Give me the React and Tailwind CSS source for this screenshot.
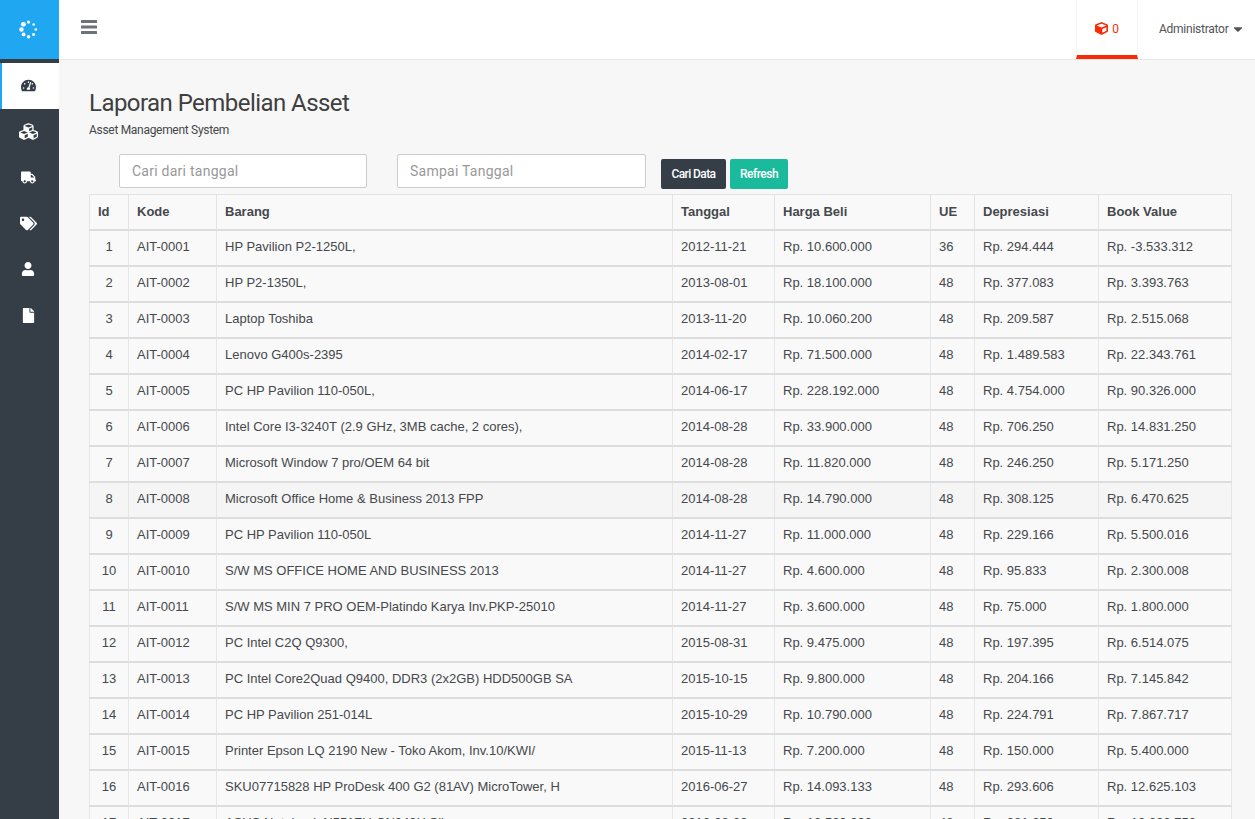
import { FaCaretDown, FaCube, FaCubes, FaFile, FaTachometerAlt, FaTags, FaTruck, FaUser } from "react-icons/fa";

const rows = [
    [1, "AIT-0001", "HP Pavilion P2-1250L,", "2012-11-21", "Rp. 10.600.000", "36", "Rp. 294.444", "Rp. -3.533.312"],
    [2, "AIT-0002", "HP P2-1350L,", "2013-08-01", "Rp. 18.100.000", "48", "Rp. 377.083", "Rp. 3.393.763"],
    [3, "AIT-0003", "Laptop Toshiba", "2013-11-20", "Rp. 10.060.200", "48", "Rp. 209.587", "Rp. 2.515.068"],
    [4, "AIT-0004", "Lenovo G400s-2395", "2014-02-17", "Rp. 71.500.000", "48", "Rp. 1.489.583", "Rp. 22.343.761"],
    [5, "AIT-0005", "PC HP Pavilion 110-050L,", "2014-06-17", "Rp. 228.192.000", "48", "Rp. 4.754.000", "Rp. 90.326.000"],
    [6, "AIT-0006", "Intel Core I3-3240T (2.9 GHz, 3MB cache, 2 cores),", "2014-08-28", "Rp. 33.900.000", "48", "Rp. 706.250", "Rp. 14.831.250"],
    [7, "AIT-0007", "Microsoft Window 7 pro/OEM 64 bit", "2014-08-28", "Rp. 11.820.000", "48", "Rp. 246.250", "Rp. 5.171.250"],
    [8, "AIT-0008", "Microsoft Office Home & Business 2013 FPP", "2014-08-28", "Rp. 14.790.000", "48", "Rp. 308.125", "Rp. 6.470.625"],
    [9, "AIT-0009", "PC HP Pavilion 110-050L", "2014-11-27", "Rp. 11.000.000", "48", "Rp. 229.166", "Rp. 5.500.016"],
    [10, "AIT-0010", "S/W MS OFFICE HOME AND BUSINESS 2013", "2014-11-27", "Rp. 4.600.000", "48", "Rp. 95.833", "Rp. 2.300.008"],
    [11, "AIT-0011", "S/W MS MIN 7 PRO OEM-Platindo Karya Inv.PKP-25010", "2014-11-27", "Rp. 3.600.000", "48", "Rp. 75.000", "Rp. 1.800.000"],
    [12, "AIT-0012", "PC Intel C2Q Q9300,", "2015-08-31", "Rp. 9.475.000", "48", "Rp. 197.395", "Rp. 6.514.075"],
    [13, "AIT-0013", "PC Intel Core2Quad Q9400, DDR3 (2x2GB) HDD500GB SA", "2015-10-15", "Rp. 9.800.000", "48", "Rp. 204.166", "Rp. 7.145.842"],
    [14, "AIT-0014", "PC HP Pavilion 251-014L", "2015-10-29", "Rp. 10.790.000", "48", "Rp. 224.791", "Rp. 7.867.717"],
    [15, "AIT-0015", "Printer Epson LQ 2190 New - Toko Akom, Inv.10/KWI/", "2015-11-13", "Rp. 7.200.000", "48", "Rp. 150.000", "Rp. 5.400.000"],
    [16, "AIT-0016", "SKU07715828 HP ProDesk 400 G2 (81AV) MicroTower, H", "2016-06-27", "Rp. 14.093.133", "48", "Rp. 293.606", "Rp. 12.625.103"],
    [17, "AIT-0017", "ASUS Notebook N551ZU-CN049H Slim", "2016-08-30", "Rp. 13.500.000", "48", "Rp. 281.250", "Rp. 12.093.750"],
];

const headers = ["Id", "Kode", "Barang", "Tanggal", "Harga Beli", "UE", "Depresiasi", "Book Value"];
const widths = ["w-[39px]", "w-[88px]", "w-[456px]", "w-[102px]", "w-[156px]", "w-[44px]", "w-[124px]", "w-[133px]"];
const navIcons = [
    { icon: FaCubes, size: "text-[19px]" },
    { icon: FaTruck, size: "text-[15px]" },
    { icon: FaTags, size: "text-[17px]" },
    { icon: FaUser, size: "text-[14px]" },
    { icon: FaFile, size: "text-[15px]" },
];

function Spinner() {
    return (
        <svg viewBox="0 0 20 20" className="h-[19px] w-[19px]" fill="white">
            <circle cx="10" cy="2.2" r="1.7" />
            <circle cx="15.4" cy="4.7" r="1.3" />
            <circle cx="17.7" cy="10" r="1.4" />
            <circle cx="15.3" cy="15.3" r="1.6" />
            <circle cx="10" cy="17.7" r="1.8" />
            <circle cx="4.8" cy="15.2" r="2" />
            <circle cx="2.6" cy="10" r="2.3" />
            <circle cx="4.6" cy="4.6" r="2.6" />
        </svg>
    );
}

function Bars() {
    return (
        <svg viewBox="0 0 16 14" className="h-[14px] w-[16px]" fill="#6d7178">
            <rect width="16" height="3" rx="0.5" />
            <rect y="5.5" width="16" height="3" rx="0.5" />
            <rect y="11" width="16" height="3" rx="0.5" />
        </svg>
    );
}

export default function App() {
    return (
        <div className="flex h-[819px] overflow-hidden bg-[#f7f7f7] font-['Roboto',sans-serif] text-[#73879c]">
            <aside className="w-[59px] shrink-0 bg-[#353d47]">
                <div className="flex h-[59px] items-center justify-center bg-[#1fa8f1] pr-[2px] text-white">
                    <Spinner />
                </div>
                <div className="mt-1 flex h-[46px] items-center justify-center border-l-[2px] border-[#1fa8f1] bg-white pr-[4px] pb-[1px] text-[#353d47]">
                    <FaTachometerAlt className="text-[15px]" />
                </div>
                {navIcons.map(({ icon: Icon, size }, i) => (
                    <div key={i} className="flex h-[46px] items-center justify-center pr-[3px] pb-[2px] text-white">
                        <Icon className={size} />
                    </div>
                ))}
            </aside>

            <div className="flex min-w-0 flex-1 flex-col">
                <header className="flex h-[60px] shrink-0 items-stretch justify-between border-b border-[#e6e6e6] bg-white">
                    <div className="flex items-center pl-[22px] pb-[5px]">
                        <Bars />
                    </div>
                    <div className="flex">
                        <div className="flex w-[62px] items-center justify-center gap-1 border-x border-b-[4px] border-x-[#f5f5f5] border-b-[#f92b05] pt-[2px] text-[12px] text-[#f92b05]">
                            <FaCube className="text-[13px]" />
                            <span>0</span>
                        </div>
                        <div className="flex w-[117px] items-center gap-[2px] pb-[2px] pl-[21px] text-[12px] tracking-[-0.25px] text-[#515356]">
                            <span>Administrator</span>
                            <FaCaretDown className="text-[14px]" />
                        </div>
                    </div>
                </header>

                <main className="min-h-0 flex-1 px-[30px]">
                    <h1 className="mt-[27px] text-[24px] leading-[32px] tracking-[-0.55px] text-[#3f3f3f]">Laporan Pembelian Asset</h1>
                    <p className="mt-[3px] text-[12px] leading-[17px] tracking-[-0.3px] text-[#44474b]">Asset Management System</p>

                    <div className="mt-[15px] flex items-end pl-[30px]">
                        <input placeholder="Cari dari tanggal" className="h-[34px] w-[248px] rounded-[2px] border border-[#cccccc] bg-white px-3 text-[14px] tracking-[0.25px] outline-none placeholder:text-[#999999]" />
                        <input placeholder="Sampai Tanggal" className="ml-[30px] h-[34px] w-[249px] rounded-[2px] border border-[#cccccc] bg-white px-3 text-[14px] tracking-[0.25px] outline-none placeholder:text-[#999999]" />
                        <button className="ml-[15px] h-[30px] w-[65px] translate-y-[1px] rounded-[2px] bg-[#353d47] text-[12px] font-medium tracking-[-0.6px] text-white">Cari Data</button>
                        <button className="ml-[4px] h-[30px] w-[58px] translate-y-[1px] rounded-[2px] bg-[#1abb9c] text-[12px] font-medium tracking-[-0.5px] text-white">Refresh</button>
                    </div>

                    <table className="mt-[6px] w-[1142px] table-fixed border-collapse bg-[#f9f9f9] font-['Liberation_Sans',sans-serif] text-[13px] text-[#45484c]">
                        <thead>
                            <tr className="h-[35px]">
                                {headers.map((h, i) => (
                                    <th key={h} className={`${widths[i]} border border-[#e3e3e3] border-b-[2px] border-b-[#dddddd] px-2 pb-[1px] text-left font-bold`}>{h}</th>
                                ))}
                            </tr>
                        </thead>
                        <tbody>
                            {rows.map((row) => (
                                <tr key={row[0]} className={`h-[36px] ${row[0] === 8 ? "bg-[#f5f5f5]" : ""}`}>
                                    {row.map((cell, i) => (
                                        <td key={i} className={`border border-[#e6e6e6] border-b-[2px] border-b-[#dddddd] px-2 pb-[2px] ${i === 0 ? "text-center" : "text-left"}`}>{cell}</td>
                                    ))}
                                </tr>
                            ))}
                        </tbody>
                    </table>
                </main>
            </div>
        </div>
    );
}
